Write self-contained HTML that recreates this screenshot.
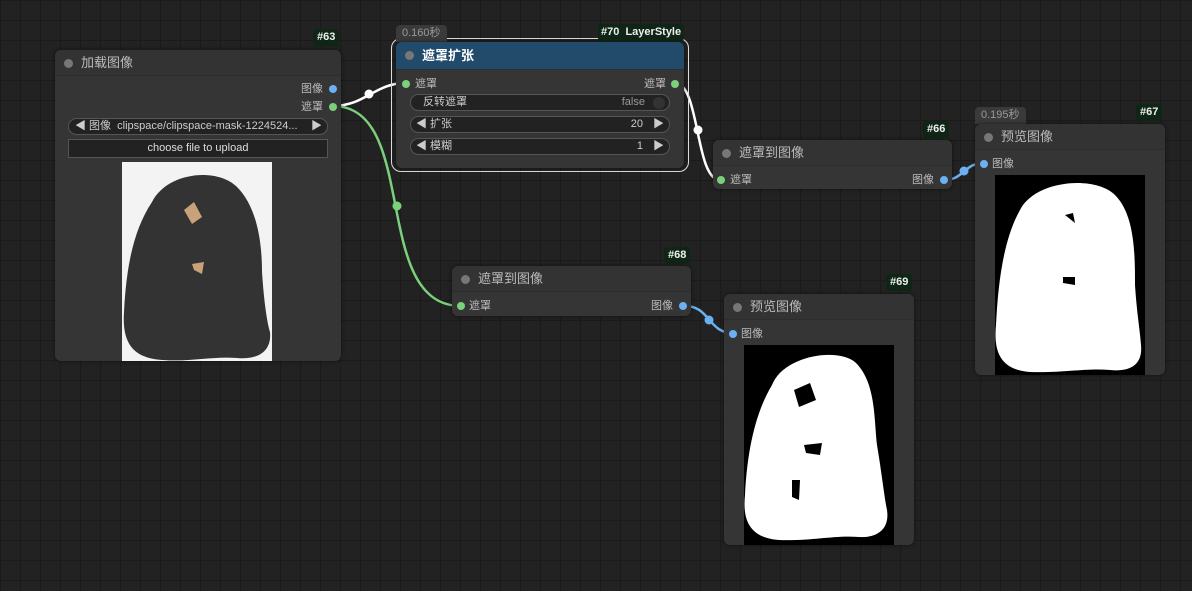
<!DOCTYPE html>
<html><head><meta charset="utf-8"><style>
*{margin:0;padding:0;box-sizing:border-box}
body{width:1192px;height:591px;overflow:hidden;position:relative;font-family:"Liberation Sans","Noto Sans CJK SC",sans-serif;
background-color:#222;
background-image:linear-gradient(#1b1b1b 1px,transparent 1px),linear-gradient(90deg,#1b1b1b 1px,transparent 1px);
background-size:20px 20px;}
.node{position:absolute;background:#353535;border-radius:6px;box-shadow:0 0 4px #0008;color:#aaa}
.title{height:26px;background:#333;border-radius:6px 6px 0 0;border-bottom:1px solid #2d2d2d;font-size:13px;color:#bbb;line-height:26px;padding-left:26px;position:relative}
.title:before{content:"";position:absolute;left:9px;top:9px;width:9px;height:9px;border-radius:50%;background:#777}
.badge{position:absolute;background:#0f2616;color:#eee;font-size:11px;font-weight:bold;padding:0 4px;height:17px;line-height:17px;border-radius:3px;white-space:nowrap}
.time{position:absolute;background:#3a3a3a;color:#999;font-size:11px;padding:0 6px;height:17px;line-height:17px;border-radius:4px 4px 0 0}
.slot{position:absolute;font-size:11px;color:#bbb;line-height:12px}
.dot{position:absolute;width:8px;height:8px;border-radius:50%}
.g{background:#7bd07b}.b{background:#6bb0f0}
.w{position:absolute;height:17px;border-radius:9px;background:#222;border:1px solid #555;font-size:11px;color:#ccc;line-height:15px;white-space:nowrap}
.img{position:absolute}
</style></head><body>
<svg style="position:absolute;left:0;top:0" width="1192" height="591">
<path d="M333,106 C365,106 375,83 406,83" stroke="#fff" stroke-width="2.5" fill="none"/>
<circle cx="369" cy="94" r="4.5" fill="#fff"/>
<path d="M333,106 C420,106 370,306 461,306" stroke="#7bd07b" stroke-width="2.5" fill="none"/>
<circle cx="397" cy="206" r="4.5" fill="#7bd07b"/>
<path d="M675,83 C700,83 695,180 720,180" stroke="#fff" stroke-width="2.5" fill="none"/>
<circle cx="698" cy="130" r="4.5" fill="#fff"/>
<path d="M685,306 C710,306 708,333 733,333" stroke="#6bb0f0" stroke-width="2.5" fill="none"/>
<circle cx="709" cy="320" r="4.5" fill="#6bb0f0"/>
<path d="M944,180 C964,180 964,163 984,163" stroke="#6bb0f0" stroke-width="2.5" fill="none"/>
<circle cx="964" cy="171" r="4.5" fill="#6bb0f0"/>
</svg>

<!-- #63 -->
<div class="badge" style="left:313px;top:29px">#63</div>
<div class="node" style="left:55px;top:50px;width:286px;height:311px">
<div class="title">加载图像</div>
<div class="slot" style="right:18px;top:33px">图像</div><div class="dot b" style="right:4px;top:35px"></div>
<div class="slot" style="right:18px;top:51px">遮罩</div><div class="dot g" style="right:4px;top:53px"></div>
<div class="w" style="left:13px;top:68px;width:260px;padding-left:6px">◀ 图像 &nbsp;clipspace/clipspace-mask-1224524...<span style="position:absolute;right:5px">▶</span></div>
<div style="position:absolute;left:13px;top:89px;width:260px;height:19px;background:#222;border:1px solid #555;font-size:11px;color:#ddd;text-align:center;line-height:17px">choose file to upload</div>
<svg class="img" style="left:67px;top:112px" width="150" height="199"><rect width="150" height="199" fill="#f3f3f3"/>
<path d="M30,40 C45,10 95,5 115,25 C135,45 140,80 140,110 C142,140 145,160 148,170 C150,190 135,198 115,196 C90,194 70,200 40,198 C10,196 0,180 2,150 C4,110 10,70 30,40Z" fill="#333"/>
<path d="M62,48 L72,40 L80,55 L70,62Z M70,102 L82,100 L80,112 L72,108Z" fill="#c9a27a"/></svg>
</div>

<!-- #70 -->
<div style="position:absolute;left:391px;top:38px;width:298px;height:134px;border:1.5px solid #ddd;border-radius:10px"></div>
<div class="time" style="left:396px;top:25px">0.160秒</div>
<div class="badge" style="left:598px;top:24px;width:86px;padding:0 3px">#70 &nbsp;LayerStyle</div>
<div class="node" style="left:396px;top:42px;width:288px;height:126px">
<div class="title" style="background:#224a6b;color:#fff;font-weight:bold;height:28px;line-height:28px">遮罩扩张</div>
<div class="slot" style="left:19px;top:36px">遮罩</div><div class="dot g" style="left:6px;top:38px"></div>
<div class="slot" style="right:18px;top:36px">遮罩</div><div class="dot g" style="right:5px;top:38px"></div>
<div class="w" style="left:14px;top:52px;width:260px;padding-left:12px">反转遮罩<span style="position:absolute;right:24px;color:#999">false</span><span style="position:absolute;right:4px;top:2px;width:12px;height:12px;border-radius:50%;background:#333"></span></div>
<div class="w" style="left:14px;top:74px;width:260px;padding-left:5px">◀ 扩张<span style="position:absolute;right:26px">20</span><span style="position:absolute;right:5px">▶</span></div>
<div class="w" style="left:14px;top:96px;width:260px;padding-left:5px">◀ 模糊<span style="position:absolute;right:26px">1</span><span style="position:absolute;right:5px">▶</span></div>
</div>

<!-- #66 -->
<div class="badge" style="left:923px;top:121px">#66</div>
<div class="node" style="left:713px;top:140px;width:239px;height:49px">
<div class="title">遮罩到图像</div>
<div class="slot" style="left:17px;top:34px">遮罩</div><div class="dot g" style="left:4px;top:36px"></div>
<div class="slot" style="right:18px;top:34px">图像</div><div class="dot b" style="right:4px;top:36px"></div>
</div>

<!-- #68 -->
<div class="badge" style="left:664px;top:247px">#68</div>
<div class="node" style="left:452px;top:266px;width:239px;height:50px">
<div class="title">遮罩到图像</div>
<div class="slot" style="left:17px;top:34px">遮罩</div><div class="dot g" style="left:5px;top:36px"></div>
<div class="slot" style="right:18px;top:34px">图像</div><div class="dot b" style="right:4px;top:36px"></div>
</div>

<!-- #67 -->
<div class="time" style="left:975px;top:107px">0.195秒</div>
<div class="badge" style="left:1136px;top:104px">#67</div>
<div class="node" style="left:975px;top:124px;width:190px;height:251px">
<div class="title">预览图像</div>
<div class="slot" style="left:17px;top:34px">图像</div><div class="dot b" style="left:5px;top:36px"></div>
<svg class="img" style="left:20px;top:51px" width="150" height="200"><rect width="150" height="200" fill="#000"/>
<path d="M25,35 C40,5 100,0 120,20 C140,40 140,80 140,110 C142,140 145,155 146,170 C148,190 135,197 115,195 C90,193 70,198 35,197 C8,195 -2,180 1,150 C3,110 8,65 25,35Z" fill="#fff"/>
<path d="M70,40 L78,38 L80,48Z M68,102 L80,102 L80,110 L68,108Z" fill="#000"/></svg>
</div>

<!-- #69 -->
<div class="badge" style="left:886px;top:274px">#69</div>
<div class="node" style="left:724px;top:294px;width:190px;height:251px">
<div class="title">预览图像</div>
<div class="slot" style="left:17px;top:34px">图像</div><div class="dot b" style="left:5px;top:36px"></div>
<svg class="img" style="left:20px;top:51px" width="150" height="200"><rect width="150" height="200" fill="#000"/>
<path d="M28,40 C40,10 95,2 112,18 C132,38 130,75 133,100 C138,130 140,150 143,165 C146,185 132,193 115,192 C90,190 70,196 35,195 C8,193 -2,178 1,150 C3,110 10,70 28,40Z" fill="#fff"/>
<path d="M50,45 L66,38 L72,55 L55,62Z M60,100 L78,98 L76,110 L62,108Z M48,135 L56,135 L55,155 L48,152Z" fill="#000"/></svg>
</div>
</body></html>
